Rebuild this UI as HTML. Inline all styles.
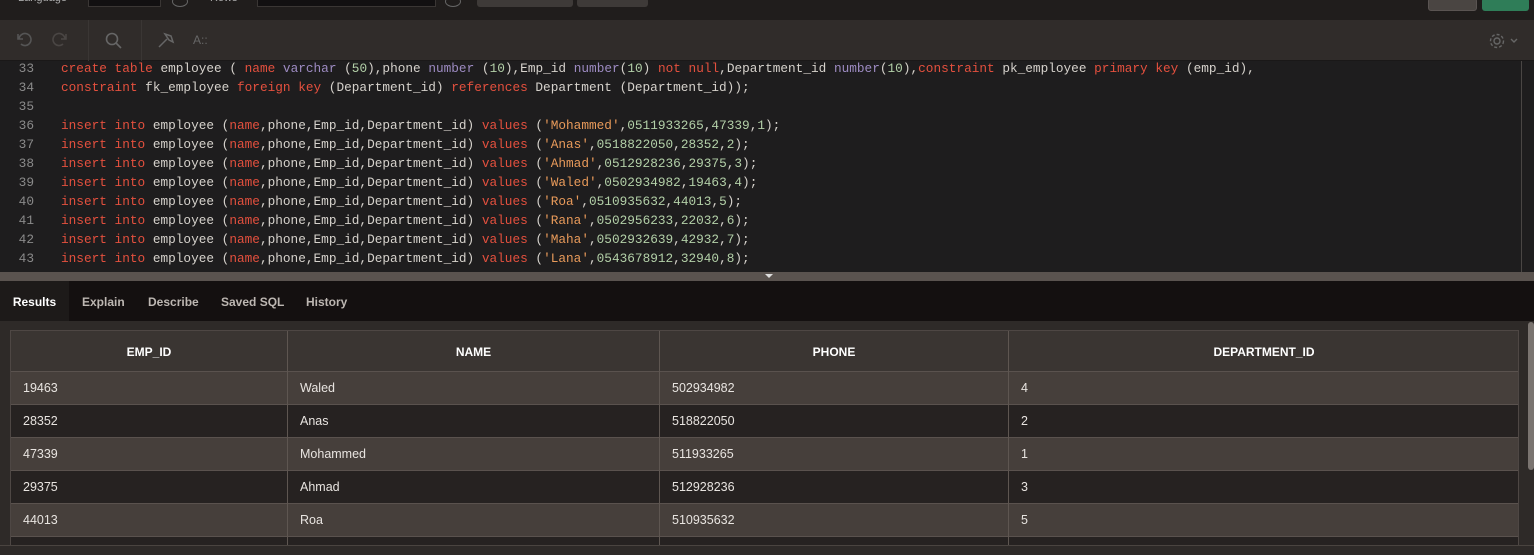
<!DOCTYPE html>
<html><head><meta charset="utf-8"><style>
*{margin:0;padding:0;box-sizing:border-box}
body{width:1534px;height:555px;overflow:hidden;background:#2e2a28;font-family:"Liberation Sans",sans-serif;position:relative}
.abs{position:absolute}
#top{left:0;top:0;width:1534px;height:20px;background:#201d1c}
#tb{left:0;top:20px;width:1534px;height:41px;background:#302c2a;border-bottom:1px solid #1a1818}
#ed{left:0;top:61px;width:1534px;height:211px;background:#1e1d1e;overflow:hidden}
.ln{position:absolute;left:0;width:40px;text-align:right;color:#8a8a8a;font:12.8px/19px "Liberation Mono",monospace}
.cd{position:absolute;left:61px;color:#d6d2cc;font:12.75px/19px "Liberation Mono",monospace;white-space:pre}
.k{color:#e4503e}.t{color:#9d8bc2}.n{color:#b3d0a8}.s{color:#e89a5a}
#split{left:0;top:272px;width:1534px;height:9px;background:#5a534f}
#tabs{left:0;top:281px;width:1534px;height:40px;background:#141010}
.tab{position:absolute;top:0;height:40px;line-height:42px;font-size:12px;font-weight:bold;color:#bdb7b2}
.cell{position:absolute;font-size:13px;color:#e8e4e0;border-right:1px solid #5e5651}
</style></head><body>
<div id="top" class="abs">
 <div class="abs" style="left:18px;top:-8px;font-size:11px;color:#aaa">Language</div>
 <div class="abs" style="left:88px;top:-2px;width:73px;height:9px;background:#121011;border:1px solid #3a3634"></div>
 <div class="abs" style="left:172px;top:-4px;width:16px;height:11px;border:1px solid #666;border-radius:50%"></div>
 <div class="abs" style="left:210px;top:-8px;font-size:11px;color:#aaa">Rows</div>
 <div class="abs" style="left:257px;top:-2px;width:179px;height:9px;background:#121011;border:1px solid #3a3634"></div>
 <div class="abs" style="left:445px;top:-4px;width:16px;height:11px;border:1px solid #666;border-radius:50%"></div>
 <div class="abs" style="left:477px;top:-2px;width:96px;height:9px;background:#3e3a38;border-radius:3px"></div>
 <div class="abs" style="left:577px;top:-2px;width:71px;height:9px;background:#3e3a38;border-radius:3px"></div>
 <div class="abs" style="left:1428px;top:-2px;width:49px;height:13px;background:#4a4542;border:1px solid #5a5452;border-radius:3px"></div>
 <div class="abs" style="left:1482px;top:-2px;width:47px;height:13px;background:#2f7d58;border-radius:3px"></div>
</div>
<div id="tb" class="abs">
 <svg class="abs" style="left:14px;top:10px" width="24" height="20" viewBox="0 0 24 20" fill="none" stroke="#555" stroke-width="1.6"><path d="M4 4v5h5M5 9a6 6 0 1 1 2 5"/></svg>
 <svg class="abs" style="left:48px;top:10px" width="24" height="20" viewBox="0 0 24 20" fill="none" stroke="#4a4644" stroke-width="1.6"><path d="M18 4v5h-5M17 9a6 6 0 1 0-2 5"/></svg>
 <div class="abs" style="left:88px;top:0;width:1px;height:41px;background:#3a3634"></div>
 <svg class="abs" style="left:104px;top:11px" width="20" height="20" viewBox="0 0 20 20" fill="none" stroke="#666" stroke-width="1.6"><circle cx="8" cy="8" r="5.5"/><path d="M12 12l5 5"/></svg>
 <div class="abs" style="left:141px;top:0;width:1px;height:41px;background:#3a3634"></div>
 <svg class="abs" style="left:156px;top:10px" width="20" height="20" viewBox="0 0 20 20" fill="none" stroke="#666" stroke-width="1.5"><path d="M3 17l8-8M9 4l6 2 2 6-4-2-4-6z"/></svg>
 <div class="abs" style="left:193px;top:13px;font-size:12px;color:#666">A::</div>
 <svg class="abs" style="left:1487px;top:11px" width="34" height="20" viewBox="0 0 34 20" fill="none" stroke="#666" stroke-width="1.4"><circle cx="10" cy="10" r="3"/><circle cx="10" cy="10" r="6.5" stroke-dasharray="3 2"/><path d="M24 8l3 3 3-3"/></svg>
</div>
<div id="ed" class="abs">
 <div class="abs" style="left:1521px;top:0;width:1px;height:211px;background:#4a4644"></div>
 <div class="ln" style="top:-2px;width:34px">33<br>34<br>35<br>36<br>37<br>38<br>39<br>40<br>41<br>42<br>43<br>44</div>
 <div class="cd" style="top:-2px"><span class="k">create table</span> employee ( <span class="k">name</span> <span class="t">varchar</span> (<span class="n">50</span>),phone <span class="t">number</span> (<span class="n">10</span>),Emp_id <span class="t">number</span>(<span class="n">10</span>) <span class="k">not null</span>,Department_id <span class="t">number</span>(<span class="n">10</span>),<span class="k">constraint</span> pk_employee <span class="k">primary key</span> (emp_id),
<span class="k">constraint</span> fk_employee <span class="k">foreign key</span> (Department_id) <span class="k">references</span> Department (Department_id));

<span class="k">insert into</span> employee (<span class="k">name</span>,phone,Emp_id,Department_id) <span class="k">values</span> (<span class="s">'Mohammed'</span>,<span class="n">0511933265</span>,<span class="n">47339</span>,<span class="n">1</span>);
<span class="k">insert into</span> employee (<span class="k">name</span>,phone,Emp_id,Department_id) <span class="k">values</span> (<span class="s">'Anas'</span>,<span class="n">0518822050</span>,<span class="n">28352</span>,<span class="n">2</span>);
<span class="k">insert into</span> employee (<span class="k">name</span>,phone,Emp_id,Department_id) <span class="k">values</span> (<span class="s">'Ahmad'</span>,<span class="n">0512928236</span>,<span class="n">29375</span>,<span class="n">3</span>);
<span class="k">insert into</span> employee (<span class="k">name</span>,phone,Emp_id,Department_id) <span class="k">values</span> (<span class="s">'Waled'</span>,<span class="n">0502934982</span>,<span class="n">19463</span>,<span class="n">4</span>);
<span class="k">insert into</span> employee (<span class="k">name</span>,phone,Emp_id,Department_id) <span class="k">values</span> (<span class="s">'Roa'</span>,<span class="n">0510935632</span>,<span class="n">44013</span>,<span class="n">5</span>);
<span class="k">insert into</span> employee (<span class="k">name</span>,phone,Emp_id,Department_id) <span class="k">values</span> (<span class="s">'Rana'</span>,<span class="n">0502956233</span>,<span class="n">22032</span>,<span class="n">6</span>);
<span class="k">insert into</span> employee (<span class="k">name</span>,phone,Emp_id,Department_id) <span class="k">values</span> (<span class="s">'Maha'</span>,<span class="n">0502932639</span>,<span class="n">42932</span>,<span class="n">7</span>);
<span class="k">insert into</span> employee (<span class="k">name</span>,phone,Emp_id,Department_id) <span class="k">values</span> (<span class="s">'Lana'</span>,<span class="n">0543678912</span>,<span class="n">32940</span>,<span class="n">8</span>);</div>
</div>
<div id="split" class="abs"><div class="abs" style="left:765px;top:2px;width:0;height:0;border-left:4px solid transparent;border-right:4px solid transparent;border-top:4px solid #ddd"></div></div>
<div id="tabs" class="abs">
 <div class="tab" style="left:0;width:69px;background:#1d1a19;color:#fff;text-align:center">Results</div>
 <div class="tab" style="left:82px">Explain</div>
 <div class="tab" style="left:148px">Describe</div>
 <div class="tab" style="left:221px">Saved SQL</div>
 <div class="tab" style="left:306px">History</div>
</div>
<div class="abs" style="left:1528px;top:322px;width:6px;height:148px;background:#7a7470;border-radius:3px"></div>
<div class="abs" style="left:10px;top:330px;width:1509px;height:225px;background:#3a3532;border:1px solid #4e4744;overflow:hidden">
 <div id="tbl"></div>
</div>
<div class="abs" style="left:0;top:545px;width:1534px;height:10px;background:#2e2a28;border-top:1px solid #4a4440"></div>
<script>
var cols=[0,277,649,998,1509];
var rows=[["EMP_ID","NAME","PHONE","DEPARTMENT_ID"],["19463","Waled","502934982","4"],["28352","Anas","518822050","2"],["47339","Mohammed","511933265","1"],["29375","Ahmad","512928236","3"],["44013","Roa","510935632","5"],["","","",""]];
var h='';
rows.forEach(function(r,i){
 var top=i==0?0:40+(i-1)*33, ht=i==0?40:33;
 var bg=i==0?'#3a3532':(i%2?'#463f3b':'#262221');
 h+='<div style="position:absolute;left:0;top:'+top+'px;width:1509px;height:'+ht+'px;background:'+bg+';border-top:'+(i?'1px solid #5a524e':'0')+'"></div>';
 r.forEach(function(c,j){
  var st=i==0?'text-align:center;font-weight:bold;color:#fff;font-size:12px;line-height:42px':'padding-left:12px;line-height:35px;font-size:12.5px';
  h+='<div class="cell" style="left:'+cols[j]+'px;top:'+top+'px;width:'+(cols[j+1]-cols[j])+'px;height:'+ht+'px;'+st+'">'+c+'</div>';
 });
});
document.getElementById('tbl').innerHTML=h;
</script>
</body></html>
